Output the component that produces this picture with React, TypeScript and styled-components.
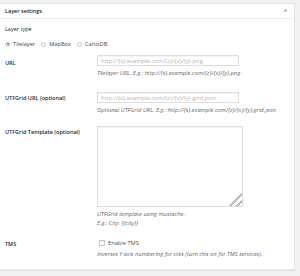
import React, { useState } from "react";
import styled, { createGlobalStyle } from "styled-components";

const GlobalStyle = createGlobalStyle`
  html, body {
    margin: 0;
    padding: 0;
    background: #f1f1f1;
    font-family: "Open Sans", "Liberation Sans", sans-serif;
    color: #23282d;
  }
`;

const Page = styled.div`
  width: 300px;
  height: 276px;
  padding: 3px 5px 0 0;
  box-sizing: border-box;
`;

const Box = styled.div`
  background: #fff;
  border: 1px solid #e5e5e5;
  border-left: none;
  box-shadow: 0 1px 1px rgba(0, 0, 0, 0.04);
  height: 267px;
  box-sizing: border-box;
`;

const Header = styled.div`
  display: flex;
  align-items: center;
  justify-content: space-between;
  height: 14px;
  padding: 0 6px 0 5px;
  border-bottom: 1px solid #eee;
  font-size: 5.5px;
  font-weight: 600;
`;

const Toggle = styled.svg`
  width: 5px;
  height: 4px;
  margin-top: -2px;
`;

const Inside = styled.div`
  padding: 6px 5px 0 5px;
`;

const SectionTitle = styled.div`
  font-size: 5.5px;
  line-height: 8px;
  margin-bottom: 7px;
`;

const Radios = styled.div`
  display: flex;
  align-items: center;
  gap: 6px;
  margin-bottom: 7px;
`;

const RadioLabel = styled.label`
  display: flex;
  align-items: center;
  gap: 3px;
  font-size: 5.7px;
  color: #444;
`;

const RadioDot = styled.span<{ $checked?: boolean }>`
  width: 5px;
  height: 5px;
  border-radius: 50%;
  border: 1px solid #c4c8cc;
  box-sizing: border-box;
  display: flex;
  align-items: center;
  justify-content: center;
  &::after {
    content: "";
    width: 2px;
    height: 2px;
    border-radius: 50%;
    background: ${(p) => (p.$checked ? "#5b6a78" : "transparent")};
  }
`;

const Row = styled.div<{ $gap: number }>`
  display: grid;
  grid-template-columns: 92px 1fr;
  padding-top: ${(p) => p.$gap}px;
`;

const Label = styled.div<{ $top: number }>`
  font-size: 5.5px;
  font-weight: 600;
  line-height: 8px;
  padding-top: ${(p) => p.$top}px;
`;

const Field = styled.div`
  display: flex;
  flex-direction: column;
`;

const TextInput = styled.input`
  width: 142px;
  height: 11px;
  box-sizing: border-box;
  border: 1px solid #ddd;
  box-shadow: inset 0 1px 1px rgba(0, 0, 0, 0.05);
  padding: 0 3px;
  font-family: inherit;
  font-size: 5.8px;
  margin: 0;
  &::placeholder {
    color: #b5b5b5;
  }
`;

const TextArea = styled.textarea`
  width: 146px;
  height: 81px;
  box-sizing: border-box;
  border: 1px solid #ddd;
  box-shadow: inset 0 1px 1px rgba(0, 0, 0, 0.05);
  margin: 0;
  padding: 2px;
  font-family: inherit;
  font-size: 5px;
  &::-webkit-resizer {
    background: linear-gradient(135deg, transparent 55%, #bbb 55%, #bbb 65%, transparent 65%, transparent 78%, #bbb 78%, #bbb 88%, transparent 88%);
  }
  &::-webkit-scrollbar-corner {
    background: transparent;
  }
`;

const Help = styled.p`
  margin: 3px 0 0;
  font-size: 5.8px;
  line-height: 9px;
  font-style: italic;
  color: #666;
  white-space: nowrap;
`;

const CheckLabel = styled.label`
  display: flex;
  align-items: center;
  gap: 3px;
  padding-left: 2px;
  font-size: 5.7px;
  color: #555;
  height: 8px;
`;

const CheckBox = styled.span`
  width: 6px;
  height: 6px;
  border: 1px solid #c8ccd0;
  box-sizing: border-box;
  box-shadow: inset 0 1px 1px rgba(0, 0, 0, 0.08);
`;

const types = ["Tilelayer", "MapBox", "CartoDB"];

export default function App() {
  const [type, setType] = useState("Tilelayer");

  return (
    <>
      <GlobalStyle />
      <Page>
        <Box>
          <Header>
            <span>Layer settings</span>
            <Toggle viewBox="0 0 10 6">
              <path d="M1 6 L5 1 L9 6 Z" fill="#a0a5aa" />
            </Toggle>
          </Header>
          <Inside>
            <SectionTitle>Layer type</SectionTitle>
            <Radios>
              {types.map((t) => (
                <RadioLabel key={t} onClick={() => setType(t)}>
                  <RadioDot $checked={type === t} />
                  {t}
                </RadioLabel>
              ))}
            </Radios>

            <Row $gap={0}>
              <Label $top={4}>URL</Label>
              <Field>
                <TextInput placeholder="http://{s}.example.com/{z}/{x}/{y}.png" />
                <Help>Tilelayer URL. E.g.: http://{"{s}"}.example.com/{"{z}"}/{"{x}"}/{"{y}"}.png</Help>
              </Field>
            </Row>

            <Row $gap={14}>
              <Label $top={2}>UTFGrid URL (optional)</Label>
              <Field>
                <TextInput placeholder="http://{s}.example.com/{z}/{x}/{y}.grid.json" />
                <Help>
                  Optional UTFGrid URL. E.g.: http://{"{s}"}.example.com/{"{z}"}/{"{x}"}/{"{y}"}.grid.json
                </Help>
              </Field>
            </Row>

            <Row $gap={11}>
              <Label $top={2}>UTFGrid Template (optional)</Label>
              <Field>
                <TextArea />
                <Help>
                  UTFGrid template using mustache.
                  <br />
                  E.g.: City: {"{{city}}"}
                </Help>
              </Field>
            </Row>

            <Row $gap={11}>
              <Label $top={1}>TMS</Label>
              <Field>
                <CheckLabel>
                  <CheckBox />
                  Enable TMS
                </CheckLabel>
                <Help>Inverses Y axis numbering for tiles (turn this on for TMS services).</Help>
              </Field>
            </Row>
          </Inside>
        </Box>
      </Page>
    </>
  );
}
